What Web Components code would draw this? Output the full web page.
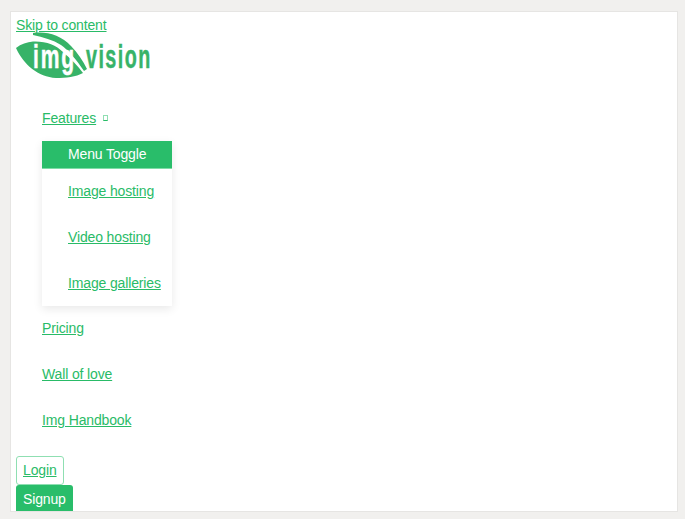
<!DOCTYPE html>
<html lang="en">
<head>
<meta charset="utf-8">
<title>Img Vision</title>
<style>
  html, body { margin: 0; height: 100%; background: #f1f0ee; }
  body { overflow: hidden; font: 14px/20px "Liberation Sans", Arial, sans-serif; letter-spacing: -0.14px; color: #29bb67; }
</style>
</head>
<body>
<site-frame>
  <skip-link>Skip to content</skip-link>
  <site-logo></site-logo>
  <site-nav>
    <nav-item caret>Features</nav-item>
    <nav-dropdown>
      <sub-item>Image hosting</sub-item>
      <sub-item>Video hosting</sub-item>
      <sub-item>Image galleries</sub-item>
    </nav-dropdown>
    <nav-item>Pricing</nav-item>
    <nav-item>Wall of love</nav-item>
    <nav-item>Img Handbook</nav-item>
  </site-nav>
  <auth-button variant="outline">Login</auth-button>
  <auth-button variant="solid">Signup</auth-button>
</site-frame>

<script>
  class SiteFrame extends HTMLElement {
    constructor() {
      super();
      this.attachShadow({ mode: "open" });
      this.shadowRoot.innerHTML = `
        <style>
          :host {
            display: block;
            box-sizing: border-box;
            margin: 11px 7px 7px 10px;
            height: 501px;
            padding: 3px 5px 0;
            background: #fff;
            border: 1px solid #e6e5e3;
            overflow: hidden;
          }
        </style>
        <slot></slot>
      `;
    }
  }

  class SkipLink extends HTMLElement {
    constructor() {
      super();
      this.attachShadow({ mode: "open" });
      this.shadowRoot.innerHTML = `
        <style>
          :host { display: block; height: 17px; }
          a { color: inherit; }
        </style>
        <a href="#content"><slot></slot></a>
      `;
    }
  }

  class SiteLogo extends HTMLElement {
    constructor() {
      super();
      this.attachShadow({ mode: "open" });
      this.shadowRoot.innerHTML = `
        <style>
          :host { display: block; height: 46px; }
          svg { display: block; overflow: visible; }
          text { font-family: "Liberation Sans", Arial, sans-serif; font-weight: 700; }
        </style>
        <svg width="136" height="46" viewBox="0 0 136 46">
          <path fill="#37b368" d="M0 16C5 12 11 10 17 9.5C30 9 40 13 47 20C55 27 62 34 67 41C60 45 50 46 40 46C22 45 8 33 0 16Z"/>
          <path fill="#37b368" d="M17 1C30 -1 45 3 55 14C62 21 67 29 71 37L68 39C60 27 52 18 45 13C37 8 27 5 17 3Z"/>
          <text transform="translate(17 36) scale(.62 1)" font-size="34" letter-spacing="3" fill="#fff" stroke="#fff" stroke-width=".5">img</text>
          <text transform="translate(70 36) scale(.58 1)" font-size="34" letter-spacing="2.5" fill="#37b368" stroke="#37b368" stroke-width=".5">vision</text>
        </svg>
      `;
    }
  }

  class SiteNav extends HTMLElement {
    constructor() {
      super();
      this.attachShadow({ mode: "open" });
      this.shadowRoot.innerHTML = `
        <style>
          :host { display: block; padding: 17px 0 0 26px; height: 378px; box-sizing: border-box; }
        </style>
        <slot></slot>
      `;
    }
  }

  class NavItem extends HTMLElement {
    constructor() {
      super();
      this.attachShadow({ mode: "open" });
      const caret = this.hasAttribute("caret") ? `<span class="caret"></span>` : "";
      this.shadowRoot.innerHTML = `
        <style>
          :host { display: flex; align-items: center; height: 46px; }
          a { color: inherit; }
          .caret { box-sizing: border-box; width: 5px; height: 6px; margin-left: 7px; border: 1px solid #8fdfb2; border-bottom-color: currentColor; }
        </style>
        <a href="#"><slot></slot></a>${caret}
      `;
    }
  }

  class NavDropdown extends HTMLElement {
    constructor() {
      super();
      this.attachShadow({ mode: "open" });
      this.shadowRoot.innerHTML = `
        <style>
          :host {
            display: block;
            width: 130px;
            margin-bottom: -1px;
            background: #fff;
            box-shadow: 0 3px 9px rgba(0, 0, 0, .09);
          }
          .toggle {
            box-sizing: border-box;
            height: 28px;
            margin-bottom: -1px;
            line-height: 26px;
            padding-left: 26px;
            background: #29bd6a;
            border-bottom: 1px solid #7ddca5;
            color: #fff;
          }
        </style>
        <div class="toggle">Menu Toggle</div>
        <slot></slot>
      `;
    }
  }

  class SubItem extends HTMLElement {
    constructor() {
      super();
      this.attachShadow({ mode: "open" });
      this.shadowRoot.innerHTML = `
        <style>
          :host { display: flex; align-items: center; height: 46px; padding-left: 26px; white-space: nowrap; }
          a { color: inherit; }
        </style>
        <a href="#"><slot></slot></a>
      `;
    }
  }

  class AuthButton extends HTMLElement {
    constructor() {
      super();
      this.attachShadow({ mode: "open" });
      const solid = this.getAttribute("variant") === "solid";
      this.shadowRoot.innerHTML = `
        <style>
          :host { display: block; width: max-content; }
          a {
            display: block;
            box-sizing: border-box;
            height: ${solid ? 28 : 29}px;
            line-height: ${solid ? 28 : 27}px;
            padding: 0 ${solid ? 7 : 6}px;
            border-radius: 3px;
            ${solid
              ? "background: #29bd6a; color: #fff; text-decoration: none;"
              : "border: 1px solid #8fdfb2; color: inherit;"}
          }
        </style>
        <a href="#"><slot></slot></a>
      `;
    }
  }

  customElements.define("site-frame", SiteFrame);
  customElements.define("skip-link", SkipLink);
  customElements.define("site-logo", SiteLogo);
  customElements.define("site-nav", SiteNav);
  customElements.define("nav-item", NavItem);
  customElements.define("nav-dropdown", NavDropdown);
  customElements.define("sub-item", SubItem);
  customElements.define("auth-button", AuthButton);
</script>
</body>
</html>
